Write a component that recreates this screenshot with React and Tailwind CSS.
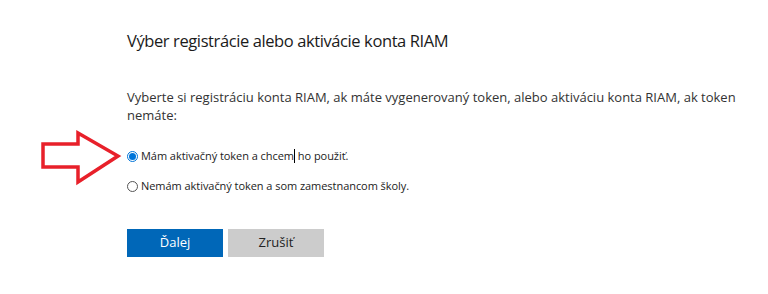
import React, { useState } from 'react';

const Arrow = () => (
  <svg className="absolute left-[40px] top-[130px]" width="82" height="56" viewBox="0 0 82 56">
    <path
      d="M3 14 H38 V3 L78 26 L38 52 V37 H3 Z"
      fill="none"
      stroke="#e8202a"
      strokeWidth="3.5"
      strokeLinejoin="miter"
    />
  </svg>
);

const Radio = ({ checked, onClick, children }) => (
  <label className="flex items-center h-[16px] gap-[3px] cursor-pointer" onClick={onClick}>
    <span
      className={
        checked
          ? 'w-[11px] h-[11px] rounded-full border border-[#0075d9] flex items-center justify-center'
          : 'w-[11px] h-[11px] rounded-full border border-[#555]'
      }
    >
      {checked && <span className="w-[7px] h-[7px] rounded-full bg-[#0075d9]"></span>}
    </span>
    <span className="text-[11px] text-[#222] tracking-[-0.05px]">{children}</span>
  </label>
);

export default function App() {
  const [choice, setChoice] = useState('token');

  return (
    <div className="relative w-[768px] h-[294px] bg-white overflow-hidden" style={{ fontFamily: '"Open Sans", "Noto Sans", sans-serif' }}>
      <Arrow />
      <div className="pl-[127px] pt-[28px]">
        <h1 className="text-[16.5px] text-[#1b1b1b] tracking-[-0.4px] leading-[26px]">
          Výber registrácie alebo aktivácie konta RIAM
        </h1>
        <p className="mt-[34px] w-[615px] text-[13px] leading-[18px] text-[#333]">
          Vyberte si registráciu konta RIAM, ak máte vygenerovaný token, alebo aktiváciu konta RIAM, ak token nemáte:
        </p>
        <div className="mt-[24px] flex flex-col gap-[14px]">
          <Radio checked={choice === 'token'} onClick={() => setChoice('token')}>
            Mám aktivačný token a chcem<span className="inline-block w-px h-[14px] bg-black align-middle -mt-[2px]"></span> ho použiť.
          </Radio>
          <Radio checked={choice === 'staff'} onClick={() => setChoice('staff')}>
            Nemám aktivačný token a som zamestnancom školy.
          </Radio>
        </div>
        <div className="mt-[35px] flex gap-[5px]">
          <button className="w-[96px] h-[28px] bg-[#0067b8] text-white text-[13px]">Ďalej</button>
          <button className="w-[96px] h-[28px] bg-[#cccccc] text-[#222] text-[13px]">Zrušiť</button>
        </div>
      </div>
    </div>
  );
}
